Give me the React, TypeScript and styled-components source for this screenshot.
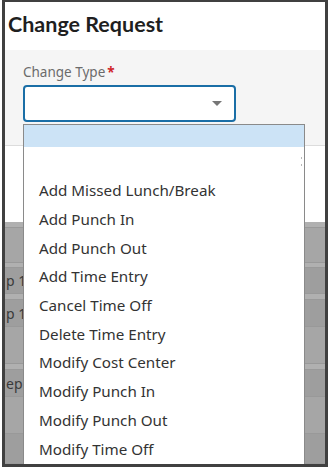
import React from "react";
import styled, { createGlobalStyle } from "styled-components";

const GlobalStyle = createGlobalStyle`
  html, body {
    margin: 0;
    padding: 0;
    background: #ffffff;
  }
  body {
    font-family: "Noto Sans", "Open Sans", sans-serif;
  }
`;

const Page = styled.div`
  width: 331px;
  height: 471px;
  padding: 0 3px 4px 2px;
  box-sizing: border-box;
  background: #ffffff;
`;

const Frame = styled.div`
  position: relative;
  height: 100%;
  box-sizing: border-box;
  border: 3px solid #404040;
  border-top-width: 2px;
  overflow: hidden;
  display: flex;
  flex-direction: column;
`;

const Header = styled.div`
  height: 50px;
  display: flex;
  align-items: center;
  padding: 0 0 4px 3px;
  box-sizing: border-box;
  background: #ffffff;
`;

const Title = styled.h1`
  margin: 0;
  font-family: "Lato", "Noto Sans", sans-serif;
  font-weight: 700;
  font-size: 21.5px;
  color: #1f1f1f;
`;

const Body = styled.div`
  height: 98px;
  background: #f5f5f5;
  padding: 13px 0 0 18px;
  box-sizing: border-box;
  border-bottom: 1px solid #dcdcdc;
`;

const Label = styled.div`
  font-size: 13.5px;
  color: #6b6b6b;
  line-height: 18px;
  margin-bottom: 4px;
`;

const Required = styled.span`
  color: #d0262b;
  font-weight: 700;
  margin-left: 2px;
`;

const Select = styled.div`
  width: 213px;
  height: 37px;
  box-sizing: border-box;
  background: #ffffff;
  border: 2px solid #1a6ea6;
  border-radius: 4px;
  display: flex;
  align-items: center;
  justify-content: flex-end;
  padding-right: 12px;
`;

const Caret = styled.span`
  width: 0;
  height: 0;
  border-left: 5px solid transparent;
  border-right: 5px solid transparent;
  border-top: 5px solid #767676;
`;

const WhiteBand = styled.div`
  height: 79px;
  background: #ffffff;
`;

const Backdrop = styled.div`
  flex: 1;
  background: #a3a3a3;
  display: flex;
  flex-direction: column;
`;

const Band = styled.div<{ $h: number; $tone?: "light" | "dark" }>`
  height: ${(p) => p.$h}px;
  flex-shrink: 0;
  background: ${(p) =>
    p.$tone === "light" ? "#b0b0b0" : p.$tone === "dark" ? "#9e9e9e" : "#a6a6a6"};
  border-bottom: 1px solid #999999;
  box-sizing: border-box;
  display: flex;
  align-items: center;
`;

const Cell = styled.div`
  padding-left: 1px;
  white-space: nowrap;
  font-size: 14px;
  color: #3a3a3a;
`;

const Menu = styled.ul`
  position: absolute;
  left: 18px;
  top: 122px;
  width: 282px;
  margin: 0;
  padding: 0;
  list-style: none;
  background: #ffffff;
  border: 1px solid #8a8a8a;
  box-sizing: border-box;
  height: 400px;
`;

const Highlight = styled.li`
  height: 22px;
  background: #cce3f6;
`;

const Blank = styled.li`
  height: 29px;
  position: relative;
  &::before,
  &::after {
    content: "";
    position: absolute;
    right: 2px;
    width: 1px;
    height: 2px;
    background: #b8b8b8;
  }
  &::before {
    top: 10px;
  }
  &::after {
    top: 17px;
  }
`;

const Option = styled.li`
  height: 28.7px;
  display: flex;
  align-items: center;
  padding-left: 15px;
  font-size: 15.2px;
  color: #333333;
`;

const options = [
  "Add Missed Lunch/Break",
  "Add Punch In",
  "Add Punch Out",
  "Add Time Entry",
  "Cancel Time Off",
  "Delete Time Entry",
  "Modify Cost Center",
  "Modify Punch In",
  "Modify Punch Out",
  "Modify Time Off",
];

export default function App() {
  return (
    <Page>
      <GlobalStyle />
      <Frame>
        <Header>
          <Title>Change Request</Title>
        </Header>
        <Body>
          <Label>
            Change Type<Required>*</Required>
          </Label>
          <Select>
            <Caret />
          </Select>
        </Body>
        <WhiteBand />
        <Backdrop>
          <Band $h={6} $tone="light" />
          <Band $h={35} />
          <Band $h={5} $tone="light" />
          <Band $h={26} $tone="dark">
            <Cell>p 1</Cell>
          </Band>
          <Band $h={6} $tone="light" />
          <Band $h={27} $tone="dark">
            <Cell>p 1</Cell>
          </Band>
          <Band $h={37} />
          <Band $h={6} $tone="light" />
          <Band $h={27} $tone="dark">
            <Cell>ep</Cell>
          </Band>
          <Band $h={37} />
          <Band $h={30} $tone="dark" />
        </Backdrop>
        <Menu>
          <Highlight />
          <Blank />
          {options.map((o) => (
            <Option key={o}>{o}</Option>
          ))}
        </Menu>
      </Frame>
    </Page>
  );
}
